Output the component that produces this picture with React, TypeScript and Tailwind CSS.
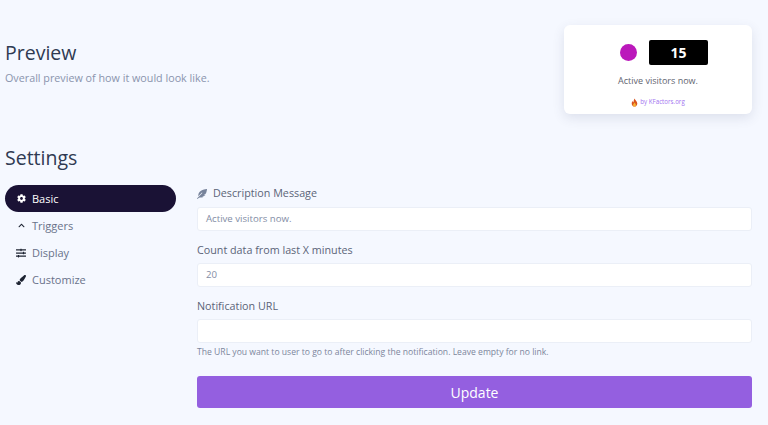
import React from 'react';
import { FaCog, FaChevronUp, FaSlidersH, FaPaintBrush, FaFeatherAlt } from 'react-icons/fa';

const navItems = [
  { icon: FaCog, label: 'Basic', active: true, size: 'w-[9px] h-[9px]' },
  { icon: FaChevronUp, label: 'Triggers', active: false, size: 'w-[7px] h-[7px]' },
  { icon: FaSlidersH, label: 'Display', active: false, size: 'w-[10px] h-[10px]' },
  { icon: FaPaintBrush, label: 'Customize', active: false, size: 'w-[10px] h-[10px]' },
];

function Flame() {
  return (
    <svg viewBox="0 0 12 14" className="w-[7px] h-[9px]">
      <path d="M6 0c.6 2.6 4.8 4.4 4.8 8.6C10.800 11.800 8.600 14 6 14S1.200 11.800 1.200 8.600c0-1.800 1-3.200 2-4 .1 1 .5 1.800 1.100 2.200C4.300 4.400 4.800 2 6 0z" fill="#d9541e" />
      <path d="M6 7c.4 1.300 2.400 2.200 2.400 4.200C8.400 12.800 7.300 14 6 14s-2.400-1.200-2.400-2.800C3.600 9.600 5.400 8.800 6 7z" fill="#f7b733" />
    </svg>
  );
}

export default function App() {
  return (
    <div className="w-[768px] h-[425px] overflow-hidden bg-[#f5f8ff] pl-[5px] pr-[16px] pt-[25px] font-['Open_Sans',sans-serif]">
      {/* Preview header */}
      <div className="flex justify-between items-start">
        <div className="pt-[15px]">
          <h2 className="text-[19.5px] leading-[26px] font-medium text-[#2f3a52]">Preview</h2>
          <p className="text-[10.75px] leading-[18px] text-[#8a94ad] mt-[3px]">Overall preview of how it would look like.</p>
        </div>
        <div className="w-[188px] h-[89px] rounded-[6px] bg-white shadow-[0_4px_12px_rgba(60,70,110,0.13)] flex flex-col items-center pt-[15px]">
          <div className="flex items-center gap-[12px] pl-[12px]">
            <span className="w-[17px] h-[17px] rounded-full bg-[#bb18bb]" />
            <span className="w-[59px] h-[25px] rounded-[2px] bg-black text-white text-[14px] font-bold flex items-center justify-center">15</span>
          </div>
          <p className="text-[9px] leading-[12px] text-[#5f6470] mt-[10px]">Active visitors now.</p>
          <div className="flex items-center gap-[2px] mt-[10px] text-[6.2px] leading-[10px] text-[#a274f0]">
            <Flame />
            <span>by KFactors.org</span>
          </div>
        </div>
      </div>

      <h2 className="text-[19.5px] leading-[26px] font-medium text-[#2f3a52] mt-[31px]">Settings</h2>

      <div className="flex mt-[14px]">
        {/* Side nav */}
        <nav className="w-[171px] shrink-0 flex flex-col">
          {navItems.map((item) => (
            <div
              key={item.label}
              className={
                item.active
                  ? 'h-[27px] rounded-full bg-[#1a1235] text-white flex items-center pl-[11px] gap-[6px] text-[11px]'
                  : 'h-[27px] text-[#69728a] flex items-center pl-[11px] gap-[6px] text-[11px]'
              }
            >
              <span className={item.active ? 'w-[10px] flex justify-center text-white' : 'w-[10px] flex justify-center text-[#1e2433]'}>
                <item.icon className={item.size} />
              </span>
              <span className="pt-[1px]">{item.label}</span>
            </div>
          ))}
        </nav>

        {/* Form */}
        <div className="ml-[21px] flex-1 flex flex-col">
          <label className="flex items-center gap-[6px] text-[10.75px] leading-[17px] text-[#5b6478]">
            <FaFeatherAlt className="w-[10px] h-[10px] text-[#77839b]" />
            Description Message
          </label>
          <div className="mt-[5px] h-[24px] rounded-[3px] bg-white border border-[#ebeff7] flex items-center px-[8px] text-[9.65px] text-[#838da5]">
            Active visitors now.
          </div>
          <label className="mt-[11px] text-[10.75px] leading-[17px] text-[#5b6478]">Count data from last X minutes</label>
          <div className="mt-[4px] h-[24px] rounded-[3px] bg-white border border-[#ebeff7] flex items-center px-[8px] text-[9.65px] text-[#838da5]">
            20
          </div>
          <label className="mt-[11px] text-[10.75px] leading-[17px] text-[#5b6478]">Notification URL</label>
          <div className="mt-[4px] h-[24px] rounded-[3px] bg-white border border-[#ebeff7]" />
          <p className="mt-[3px] text-[8.6px] leading-[13px] text-[#7c869c]">
            The URL you want to user to go to after clicking the notification. Leave empty for no link.
          </p>
          <button className="mt-[17px] h-[32px] rounded-[3px] bg-[#945fe0] text-white text-[14px] font-normal flex items-center justify-center">
            Update
          </button>
        </div>
      </div>
    </div>
  );
}
